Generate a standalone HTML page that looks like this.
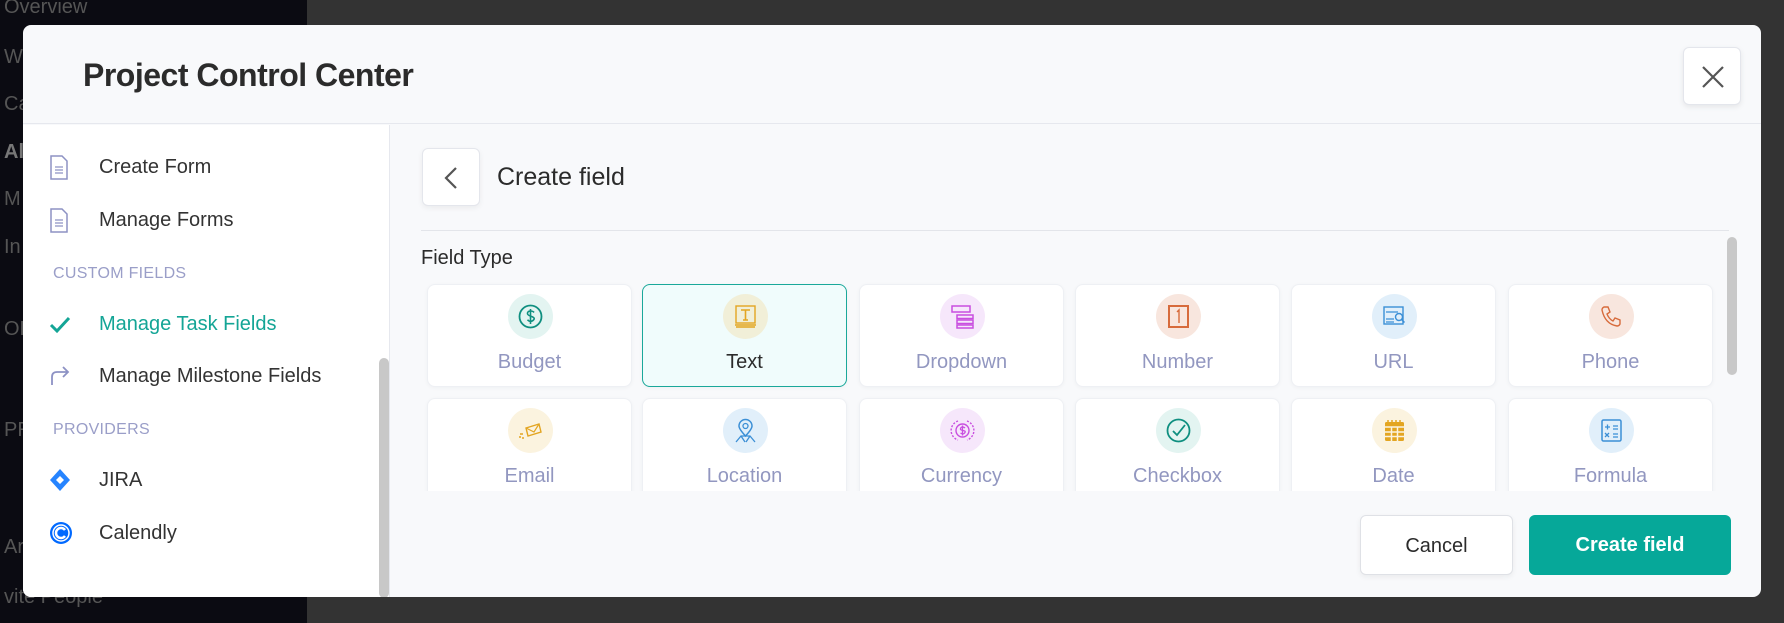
<!DOCTYPE html>
<html><head><meta charset="utf-8"><style>
*{box-sizing:border-box;margin:0;padding:0}
body{width:1784px;height:623px;overflow:hidden;background:#333;font-family:"Liberation Sans",Arial,sans-serif;position:relative}
.bgside{position:absolute;left:0;top:0;width:307px;height:623px;background:#0b0b12;color:#555;font-size:20px}
.bgside div{position:absolute;left:4px}
.modal{position:absolute;left:23px;top:25px;width:1738px;height:572px;background:#f8f9fb;border-radius:8px;overflow:hidden}
.hdr{position:absolute;left:0;top:0;width:100%;height:99px;border-bottom:1px solid #e6e8ee}
.title{position:absolute;left:60px;top:32px;font-size:32px;font-weight:bold;color:#2b2b2b;letter-spacing:-0.5px}
.close{position:absolute;left:1660px;top:22px;width:58px;height:58px;background:#fff;border:1px solid #e4e6ec;border-radius:6px;box-shadow:0 2px 6px rgba(0,0,0,.08)}
.side{position:absolute;left:0;top:100px;width:367px;height:472px;background:#fff;border-right:1px solid #e6e8ee}
.it{position:absolute;left:76px;font-size:20px;color:#333;line-height:24px}
.ic{position:absolute;left:-50px;top:0}
.sec{position:absolute;left:30px;font-size:16px;color:#9a9ec8;letter-spacing:.3px}
.sbar{position:absolute;left:356px;top:233px;width:10px;height:240px;background:#c8c8c8;border-radius:5px}
.back{position:absolute;left:399px;top:123px;width:58px;height:58px;background:#fff;border:1px solid #e4e6ec;border-radius:6px;box-shadow:0 2px 6px rgba(0,0,0,.06)}
.ctitle{position:absolute;left:474px;top:138px;font-size:25px;color:#2b2b2b}
.line{position:absolute;left:398px;top:205px;width:1308px;height:1px;background:#e3e5ea}
.ft{position:absolute;left:398px;top:222px;font-size:20px;color:#2b2b2b}
.grid{position:absolute;left:398px;top:255px;width:1310px;height:211px;overflow:hidden}
.card{position:absolute;width:205px;height:103px;background:#fff;border:1px solid #eef0f4;border-radius:8px;box-shadow:0 1px 4px rgba(0,0,0,.04)}
.card.sel{background:#f0fcfc;border:1px solid #1aa89a}
.cir{position:absolute;left:80px;top:9px;width:45px;height:45px;border-radius:50%}
.cir svg{position:absolute;left:10px;top:10px}
.lab{position:absolute;left:0;width:100%;top:66px;text-align:center;font-size:20px;color:#9297c0}
.sel .lab{color:#2b2b2b}
.rbar{position:absolute;left:1704px;top:212px;width:10px;height:138px;background:#c8c8c8;border-radius:5px}
.btn{position:absolute;top:490px;height:60px;border-radius:6px;font-size:20px;text-align:center;line-height:60px}
.cancel{left:1337px;width:153px;background:#fff;border:1px solid #dfe1e6;color:#2b2b2b;box-shadow:0 2px 6px rgba(0,0,0,.06)}
.create{left:1506px;width:202px;background:#06a899;color:#fff;font-weight:bold}
</style></head><body>
<div class="bgside"><div style="top:-4px">Overview</div><div style="top:46px">W</div><div style="top:93px">Ca</div><div style="top:141px;color:#777;font-weight:bold">Al</div><div style="top:188px">M</div><div style="top:236px">In</div><div style="top:318px">OR</div><div style="top:419px">PR</div><div style="top:536px">Ar</div><div style="top:586px">vite People</div></div>
<div class="modal">
 <div class="hdr"><div class="title">Project Control Center</div>
  <div class="close"><svg width="58" height="58"><path d="M19 19L39 39M39 19L19 39" stroke="#555" stroke-width="2.2"/></svg></div></div>
 <div class="side">
  <div class="it" style="top:30px"><svg class="ic" width="20" height="26" viewBox="0 0 20 26"><path d="M2 1h11l5 5v18H2z" fill="none" stroke="#8d92c4" stroke-width="1.5"/><path d="M6 12h8M6 15h8M6 18h8" stroke="#8d92c4" stroke-width="1.3"/></svg>Create Form</div>
  <div class="it" style="top:83px"><svg class="ic" width="20" height="26" viewBox="0 0 20 26"><path d="M2 1h11l5 5v18H2z" fill="none" stroke="#8d92c4" stroke-width="1.5"/><path d="M6 12h8M6 15h8M6 18h8" stroke="#8d92c4" stroke-width="1.3"/></svg>Manage Forms</div>
  <div class="sec" style="top:140px">CUSTOM FIELDS</div>
  <div class="it" style="top:187px;color:#14a596"><svg class="ic" width="22" height="22" viewBox="0 0 22 22" style="top:2px"><path d="M2 11l6 6L20 4" fill="none" stroke="#14a596" stroke-width="3"/></svg>Manage Task Fields</div>
  <div class="it" style="top:239px"><svg class="ic" width="22" height="22" viewBox="0 0 22 22"><path d="M3 21V13q0-5 5-5h11M14 3l5 5-5 5" fill="none" stroke="#8d92c4" stroke-width="1.8"/></svg>Manage Milestone Fields</div>
  <div class="sec" style="top:296px">PROVIDERS</div>
  <div class="it" style="top:343px"><svg class="ic" width="22" height="24" viewBox="0 0 22 24"><path d="M11 1L21 12 11 23 1 12z" fill="#2684ff"/><path d="M11 8l4 4-4 4-4-4z" fill="#fff"/></svg>JIRA</div>
  <div class="it" style="top:396px"><svg class="ic" width="24" height="24" viewBox="0 0 24 24"><circle cx="12" cy="12" r="11" fill="#0069ff"/><circle cx="12" cy="12" r="8" fill="none" stroke="#fff" stroke-width="1.5"/><path d="M16 9a5 5 0 1 0 0 6" fill="none" stroke="#fff" stroke-width="2.5"/></svg>Calendly</div>
  <div class="sbar"></div>
 </div>
 <div class="back"><svg width="58" height="58"><path d="M33 19L23 29l10 10" fill="none" stroke="#555" stroke-width="2.2"/></svg></div>
 <div class="ctitle">Create field</div>
 <div class="line"></div>
 <div class="ft">Field Type</div>
 <div class="grid">
  <div class="card" style="left:6px;top:4px"><div class="cir" style="background:#e3f4f1"><svg width="25" height="25" viewBox="0 0 25 25"><circle cx="12.5" cy="12.5" r="11" fill="none" stroke="#0f8f80" stroke-width="1.8"/><path d="M16 8.5q-1-1.5-3.5-1.5t-3 2 3.5 3.3 3 3-3 2-3.5-1.5M12.5 5v15" fill="none" stroke="#0f8f80" stroke-width="1.6"/></svg></div><div class="lab">Budget</div></div>
  <div class="card sel" style="left:221px;top:4px"><div class="cir" style="background:#f1efd8"><svg width="25" height="25" viewBox="0 0 25 25"><rect x="3" y="2" width="19" height="17" fill="none" stroke="#e3a521" stroke-width="1.4"/><path d="M8 6h9M12.5 6v10M10 16h5M2 21h21M3 23h19" stroke="#e3a521" stroke-width="1.6"/></svg></div><div class="lab">Text</div></div>
  <div class="card" style="left:438px;top:4px"><div class="cir" style="background:#f6e7fb"><svg width="25" height="25" viewBox="0 0 25 25"><rect x="2" y="2" width="18" height="6" fill="none" stroke="#c94ee0" stroke-width="1.5"/><rect x="7" y="11" width="16" height="3.5" fill="none" stroke="#c94ee0" stroke-width="1.5"/><rect x="7" y="16" width="16" height="3.5" fill="none" stroke="#c94ee0" stroke-width="1.5"/><rect x="7" y="21" width="16" height="3" fill="none" stroke="#c94ee0" stroke-width="1.5"/></svg></div><div class="lab">Dropdown</div></div>
  <div class="card" style="left:654px;top:4px"><div class="cir" style="background:#f8e6de"><svg width="25" height="25" viewBox="0 0 25 25"><rect x="3" y="2" width="19" height="21" fill="none" stroke="#d76b3c" stroke-width="2"/><path d="M11 8l2-2v13" fill="none" stroke="#d76b3c" stroke-width="1.4"/></svg></div><div class="lab">Number</div></div>
  <div class="card" style="left:870px;top:4px"><div class="cir" style="background:#e1effa"><svg width="25" height="25" viewBox="0 0 25 25"><rect x="2" y="3" width="19" height="17" fill="none" stroke="#3b8fd6" stroke-width="1.4"/><path d="M4 8h12M4 15h8M4 18h8" stroke="#3b8fd6" stroke-width="1.2"/><circle cx="17" cy="13" r="3.5" fill="none" stroke="#3b8fd6" stroke-width="1.4"/><path d="M19.5 15.5l3 3" stroke="#3b8fd6" stroke-width="1.5"/></svg></div><div class="lab">URL</div></div>
  <div class="card" style="left:1087px;top:4px"><div class="cir" style="background:#f8e6de"><svg width="25" height="25" viewBox="0 0 25 25"><path d="M5 3l4 0 2 5-3 2q2 5 6 7l2-3 5 2v4q-1 2-3 2Q6 20 3 6q0-2 2-3z" fill="none" stroke="#d76b3c" stroke-width="1.4"/></svg></div><div class="lab">Phone</div></div>
  <div class="card" style="left:6px;top:118px"><div class="cir" style="background:#fbf3df"><svg width="25" height="25" viewBox="0 0 25 25"><path d="M8 10l13-4 2 8-13 4z" fill="none" stroke="#e3a521" stroke-width="1.4"/><path d="M8 10l8 4 5-8" fill="none" stroke="#e3a521" stroke-width="1.2"/><path d="M2 16h3M1 19h2M4 20h2" stroke="#e3a521" stroke-width="1.4"/></svg></div><div class="lab">Email</div></div>
  <div class="card" style="left:221px;top:118px"><div class="cir" style="background:#e1effa"><svg width="25" height="25" viewBox="0 0 25 25"><path d="M12.5 18Q6 11 6 8a6.5 6.5 0 0 1 13 0q0 3-6.5 10z" fill="none" stroke="#3b8fd6" stroke-width="1.5"/><circle cx="12.5" cy="8" r="2.5" fill="none" stroke="#3b8fd6" stroke-width="1.3"/><path d="M3 24l5-6h9l5 6M8 18l4 6M17 18l-4 6" fill="none" stroke="#3b8fd6" stroke-width="1.3"/></svg></div><div class="lab">Location</div></div>
  <div class="card" style="left:438px;top:118px"><div class="cir" style="background:#f6e7fb"><svg width="25" height="25" viewBox="0 0 25 25"><path d="M8 3a10 10 0 0 0 0 19M17 3a10 10 0 0 1 0 19" fill="none" stroke="#c94ee0" stroke-width="1.4" stroke-dasharray="2 1.5"/><circle cx="12.5" cy="12.5" r="6.5" fill="none" stroke="#c94ee0" stroke-width="1.4"/><path d="M15 10q-1-1-2.5-1t-2 1.5 2.5 2 2 2-2 1.5-2.5-1M12.5 7.5v10" fill="none" stroke="#c94ee0" stroke-width="1.3"/></svg></div><div class="lab">Currency</div></div>
  <div class="card" style="left:654px;top:118px"><div class="cir" style="background:#e3f4f1"><svg width="25" height="25" viewBox="0 0 25 25"><circle cx="12.5" cy="12.5" r="11" fill="none" stroke="#0f8f80" stroke-width="1.8"/><path d="M7 13l4 4 8-10" fill="none" stroke="#0f8f80" stroke-width="1.8"/></svg></div><div class="lab">Checkbox</div></div>
  <div class="card" style="left:870px;top:118px"><div class="cir" style="background:#fbf3df"><svg width="25" height="25" viewBox="0 0 25 25"><rect x="3" y="4" width="19" height="19" rx="1.5" fill="#e3a521"/><path d="M6 2v4M10 2v4M14 2v4M18 2v4" stroke="#e3a521" stroke-width="1.5"/><path d="M3 9h19M3 14h19M3 18.5h19M9.5 9v14M15.5 9v14" stroke="#fbf3df" stroke-width="1.5"/></svg></div><div class="lab">Date</div></div>
  <div class="card" style="left:1087px;top:118px"><div class="cir" style="background:#e1effa"><svg width="25" height="25" viewBox="0 0 25 25"><rect x="3" y="2" width="19" height="21" rx="1.5" fill="none" stroke="#3b8fd6" stroke-width="1.5"/><path d="M6 9h5M8.5 6.5v5M14 8h5M14 11h5M6 15l4 4M10 15l-4 4M14 16h5M14 19h5" stroke="#3b8fd6" stroke-width="1.3"/></svg></div><div class="lab">Formula</div></div>
 </div>
 <div class="rbar"></div>
 <div class="btn cancel">Cancel</div>
 <div class="btn create">Create field</div>
</div>
</body></html>
